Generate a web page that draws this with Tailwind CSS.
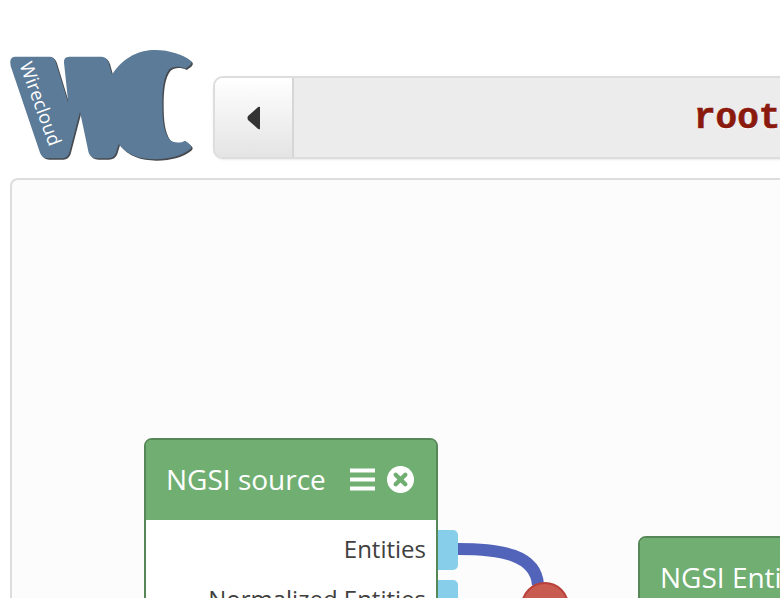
<!DOCTYPE html>
<html lang="en">
<head>
    <meta charset="UTF-8">
    <meta name="viewport" content="width=device-width, initial-scale=1.0">
    <title>Wirecloud</title>
    <script src="https://cdn.jsdelivr.net/npm/@tailwindcss/browser@4"></script>
</head>
<body class="bg-white overflow-hidden">
    <div class="w-[780px] h-[598px] overflow-hidden flex flex-col font-['Open_Sans',sans-serif]">
        <!-- header: logo + breadcrumb -->
        <header class="h-[178px] shrink-0 relative flex items-start">
            <svg class="absolute left-0 top-[40px]" width="200" height="130" viewBox="0 0 600 390">
                <defs>
                    <path id="logo" d="M44 50 L150 50 Q162 50 167 66 L205 190 L192 68 Q190 50 208 50 L305 50 Q320 50 326 68 L336 104 C370 50 420 30 465 30 C510 30 550 45 572 62 Q578 68 570 76 L556 86 C540 78 520 78 508 88 C490 110 487 150 487 192 C487 235 490 275 508 298 C520 310 540 310 556 302 L570 314 Q578 322 570 328 C550 345 510 358 465 358 C420 358 380 345 356 312 L348 338 Q342 355 322 355 L292 355 Q272 355 266 338 L240 215 L208 338 Q202 355 186 355 L144 355 Q126 355 120 338 L32 78 Q26 52 44 50 Z"/>
                </defs>
                <use href="#logo" x="4" y="4" fill="#46494d"/>
                <use href="#logo" fill="#5b7b98"/>
                <text transform="translate(58 74) rotate(70)" font-family="'Open Sans', sans-serif" font-size="56" fill="#fff">Wirecloud</text>
            </svg>
            <div class="absolute left-[213px] top-[76px] w-[640px] h-[83px] flex border-2 border-[#dddddd] rounded-[10px] overflow-hidden bg-[#ececec] shadow-[0_1px_2px_rgba(0,0,0,0.08)]">
                <button class="w-[79px] shrink-0 flex items-center justify-center bg-linear-to-b from-white to-[#e4e4e4] border-r-2 border-[#d6d6d6]">
                    <svg width="14" height="24" viewBox="0 0 14 24"><path d="M13 1 L13 23 Q12 24 10 22 L1 14 Q0 12 1 10 L10 2 Q12 0 13 1 Z" fill="#333"/></svg>
                </button>
                <div class="pl-[400px] pt-[2px] flex items-center font-['Liberation_Mono',monospace] font-bold text-[36px] text-[#8b1a0e] [-webkit-text-stroke:0.6px_#8b1a0e] [text-shadow:0_1px_1px_#fff]">root</div>
            </div>
        </header>

        <!-- wiring canvas -->
        <main class="relative ml-[10px] w-[800px] grow border-2 border-b-0 border-[#dddddd] rounded-t-[8px] bg-[#fcfcfc]">
            <svg class="absolute left-0 top-0" width="780" height="420">
                <path d="M446 369 C490 369 524 375 526 405" fill="none" stroke="#5264b9" stroke-width="12"/>
            </svg>

            <div class="absolute left-[132px] top-[258px] w-[294px] border-2 border-[#568756] rounded-t-[8px] bg-white">
                <div class="h-[80px] bg-[#70ae72] rounded-t-[5px] flex items-center pl-[20px] text-white text-[28px] pb-[1px]">
                    <span class="leading-none mt-[-2px]">NGSI source</span>
                    <svg class="ml-[24px]" width="25" height="24" viewBox="0 0 25 24">
                        <path d="M0 2.5h25M0 11.5h25M0 20.5h25" stroke="#fff" stroke-width="4"/>
                    </svg>
                    <svg class="ml-[12px]" width="27" height="27" viewBox="0 0 28 28">
                        <circle cx="14" cy="14" r="14" fill="#fff"/>
                        <path d="M9 9 L19 19 M19 9 L9 19" stroke="#70ae72" stroke-width="4.5" stroke-linecap="round"/>
                    </svg>
                </div>
                <div class="text-[#404040] text-[24px] text-right pr-[10px]">
                    <div class="h-[50px] flex items-center justify-end pt-[7px]">Entities</div>
                    <div class="h-[50px] flex items-center justify-end pt-[7px]">Normalized Entities</div>
                </div>
            </div>
            <div class="absolute left-[426px] top-[350px] w-[20px] h-[40px] bg-[#87ceea] rounded-r-[5px]"></div>
            <div class="absolute left-[426px] top-[400px] w-[20px] h-[40px] bg-[#87ceea] rounded-r-[5px]"></div>

            <div class="absolute left-[509px] top-[402px] w-[48px] h-[48px] rounded-full bg-[#c95c50] border-2 border-[#b8423b]"></div>

            <div class="absolute left-[626px] top-[356px] w-[294px] border-2 border-[#568756] rounded-t-[8px] bg-white">
                <div class="h-[80px] bg-[#70ae72] rounded-t-[5px] flex items-center pl-[20px] text-white text-[28px] pb-[1px]">
                    <span class="leading-none mt-[-2px]">NGSI Entity</span>
                </div>
            </div>
        </main>
    </div>
</body>
</html>
